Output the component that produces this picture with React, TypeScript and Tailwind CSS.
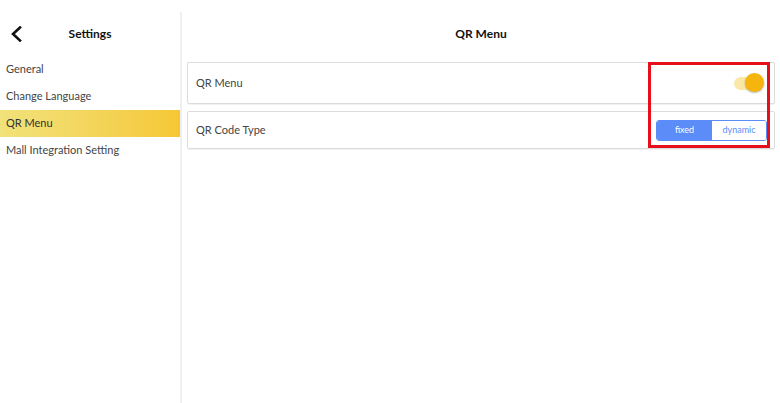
import React from 'react'

const menuItems = ['General', 'Change Language', 'QR Menu', 'Mall Integration Setting']

const App = () => {
  return (
    <div className="relative flex h-[403px] w-[780px] bg-white pt-3 text-[#333] [font-family:Lato,'Liberation_Sans',sans-serif]">
      {/* Sidebar */}
      <aside className="flex w-[182px] shrink-0 flex-col border-r-2 border-[#efefef]">
        <div className="relative flex h-[44px] items-center justify-center">
          <svg className="absolute left-[10px] top-[14px]" width="13" height="16" viewBox="0 0 13 16">
            <path d="M10 1.5 L3 8 L10 14.5" fill="none" stroke="#111" strokeWidth="2.6" strokeLinecap="square" />
          </svg>
          <span className="text-[12px] font-bold text-[#111]">Settings</span>
        </div>
        {menuItems.map((item) => (
          <div
            key={item}
            className={
              item === 'QR Menu'
                ? 'flex h-[27px] items-center bg-gradient-to-r from-[#f1e27a] to-[#f5c833] px-[6px] text-[11px] text-[#333]'
                : 'flex h-[27px] items-center px-[6px] text-[11px] text-[#444]'
            }
          >
            {item}
          </div>
        ))}
      </aside>

      {/* Main */}
      <main className="flex flex-1 flex-col px-[5px]">
        <div className="flex h-[44px] items-center justify-center">
          <span className="text-[12px] font-bold text-[#111]">QR Menu</span>
        </div>
        <div className="mt-[6px] flex h-[42px] items-center justify-between rounded-[2px] border border-[#dcdcdc] pl-[8px] pr-[10px] shadow-[0_1px_1px_rgba(0,0,0,0.06)]">
          <span className="text-[11px] text-[#444]">QR Menu</span>
          <div className="relative flex h-[20px] w-[30px] items-center">
            <div className="h-[13px] w-[28px] rounded-full bg-[#fbe7a6]" />
            <div className="absolute right-0 top-0 h-[19px] w-[19px] rounded-full bg-[#f6b50c] shadow-[0_1px_2px_rgba(0,0,0,0.3)]" />
          </div>
        </div>
        <div className="mt-[7px] flex h-[38px] items-center justify-between rounded-[2px] border border-[#dcdcdc] pl-[8px] pr-[7px] shadow-[0_1px_1px_rgba(0,0,0,0.06)]">
          <span className="text-[11px] text-[#444]">QR Code Type</span>
          <div className="flex h-[21px] w-[111px] overflow-hidden rounded-[3px] border border-[#5b8cf8] text-[9px]">
            <div className="flex w-[55px] items-center justify-center bg-[#5b8cf8] text-white">fixed</div>
            <div className="flex flex-1 items-center justify-center bg-white text-[#5b8cf8]">dynamic</div>
          </div>
        </div>
      </main>

      {/* Highlight annotation */}
      <div className="pointer-events-none absolute left-[648px] top-[62px] h-[86px] w-[122px] border-[3px] border-[#e6101c]" />
    </div>
  )
}

export default App
